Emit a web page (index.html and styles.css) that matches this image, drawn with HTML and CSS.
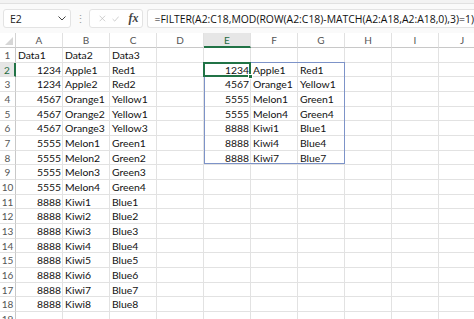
FILE: index.html
```html
<!DOCTYPE html>
<html lang="en">
<head>
  <meta charset="UTF-8" />
  <meta name="viewport" content="width=device-width, initial-scale=1.0" />
  <title>FILTER every third row</title>
  <link rel="stylesheet" href="styles.css">
</head>
<body>
  <div class="ribbon-edge"></div>

  <div class="formula-bar">
    <div class="name-box">
      <span>E2</span>
      <svg class="chevron" width="8" height="5" viewBox="0 0 8 5"><path d="M0.5 0.5 L4 4 L7.5 0.5" fill="none" stroke="#444" stroke-width="1"/></svg>
    </div>
    <div class="grip">⋮</div>
    <div class="fx-tools">
      <svg width="11" height="11" viewBox="0 0 11 11"><path d="M1 1 L10 10 M10 1 L1 10" stroke="#b8b8b8" stroke-width="1.1"/></svg>
      <svg width="12" height="10" viewBox="0 0 12 10"><path d="M1 5 L4.5 8.5 L11 1" fill="none" stroke="#b8b8b8" stroke-width="1.1"/></svg>
      <span class="fx">fx</span>
    </div>
    <div class="formula">=FILTER(A2:C18,MOD(ROW(A2:C18)-MATCH(A2:A18,A2:A18,0),3)=1)</div>
  </div>

  <div class="sheet" id="sheet"></div>

  <script>
    const source = [
      ['Data1', 'Data2', 'Data3'],
      [1234, 'Apple1', 'Red1'],
      [1234, 'Apple2', 'Red2'],
      [4567, 'Orange1', 'Yellow1'],
      [4567, 'Orange2', 'Yellow1'],
      [4567, 'Orange3', 'Yellow3'],
      [5555, 'Melon1', 'Green1'],
      [5555, 'Melon2', 'Green2'],
      [5555, 'Melon3', 'Green3'],
      [5555, 'Melon4', 'Green4'],
      [8888, 'Kiwi1', 'Blue1'],
      [8888, 'Kiwi2', 'Blue2'],
      [8888, 'Kiwi3', 'Blue3'],
      [8888, 'Kiwi4', 'Blue4'],
      [8888, 'Kiwi5', 'Blue5'],
      [8888, 'Kiwi6', 'Blue6'],
      [8888, 'Kiwi7', 'Blue7'],
      [8888, 'Kiwi8', 'Blue8']
    ];

    // result of the FILTER formula, spilled from E2
    const spill = [
      [1234, 'Apple1', 'Red1'],
      [4567, 'Orange1', 'Yellow1'],
      [5555, 'Melon1', 'Green1'],
      [5555, 'Melon4', 'Green4'],
      [8888, 'Kiwi1', 'Blue1'],
      [8888, 'Kiwi4', 'Blue4'],
      [8888, 'Kiwi7', 'Blue7']
    ];

    const letters = 'ABCDEFGHIJ';
    const sheet = document.getElementById('sheet');

    function cell(cls, value) {
      const div = document.createElement('div');
      div.className = cls;
      if (value !== undefined && value !== '') {
        div.textContent = value;
        if (typeof value === 'number') div.classList.add('num');
      }
      sheet.appendChild(div);
      return div;
    }

    cell('corner');
    for (const l of letters) {
      cell(l === 'E' ? 'col-head active' : 'col-head', l);
    }

    for (let r = 1; r <= 19; r++) {
      cell(r === 2 ? 'row-head active' : 'row-head', String(r));
      for (let c = 0; c < letters.length; c++) {
        let value = '';
        if (c < 3 && source[r - 1]) value = source[r - 1][c];
        if (c >= 4 && c < 7 && r >= 2 && spill[r - 2]) value = spill[r - 2][c - 4];
        const div = cell('cell', value);
        if (r === 2 && c === 4) {
          div.classList.add('anchor');
          div.insertAdjacentHTML('beforeend', '<span class="spill-range"></span><span class="selection"></span>');
        }
      }
    }
  </script>
</body>
</html>
```

FILE: styles.css
```css
body {
  margin: 0;
  width: 474px;
  height: 319px;
  overflow: hidden;
  background: #fff;
  font-family: 'Segoe UI', 'Open Sans', sans-serif;
}
.ribbon-edge {
  height: 3px;
  background: #f3f3f3;
  border-bottom: 1px solid #e1e1e1;
}
.formula-bar {
  display: flex;
  align-items: center;
  gap: 4px;
  height: 29px;
  padding: 0 0 0 3px;
  background: #fafafa;
}
.name-box {
  display: flex;
  align-items: center;
  justify-content: space-between;
  width: 74px;
  height: 19px;
  box-sizing: border-box;
  padding: 0 4px 0 6px;
  background: #fff;
  border: 1px solid #e3e3e3;
  border-radius: 3px;
  font-size: 10.5px;
  color: #222;
}
.grip {
  width: 10px;
  text-align: center;
  color: #a0a0a0;
  font-size: 11px;
}
.fx-tools {
  display: flex;
  align-items: center;
  gap: 6px;
  width: 54px;
  height: 19px;
  box-sizing: border-box;
  padding: 0 4px 0 9px;
  background: #fff;
  border: 1px solid #e3e3e3;
  border-radius: 3px;
}
.fx {
  font-family: 'Liberation Serif', serif;
  font-style: italic;
  font-weight: bold;
  font-size: 12px;
  color: #444;
  margin-left: 3px;
}
.formula {
  flex: 1;
  height: 19px;
  line-height: 18px;
  box-sizing: border-box;
  padding-left: 6px;
  background: #fff;
  border: 1px solid #e3e3e3;
  border-right: none;
  border-radius: 3px 0 0 3px;
  font-size: 10.4px;
  color: #111;
  white-space: nowrap;
}
.sheet {
  display: grid;
  grid-template-columns: 16px repeat(10, 47px);
  grid-template-rows: 15px;
  grid-auto-rows: 14.67px;
  font-family: Lato, 'Open Sans', sans-serif;
  font-size: 10.4px;
  color: #111;
}
.sheet > div {
  box-sizing: border-box;
  white-space: nowrap;
  overflow: hidden;
}
.corner {
  position: relative;
  border-right: 1px solid #d4d4d4;
  border-bottom: 1px solid #c8c8c8;
}
.corner::after {
  content: '';
  position: absolute;
  right: 2px;
  bottom: 2px;
  border-left: 8px solid transparent;
  border-bottom: 8px solid #d6d6d6;
}
.col-head {
  text-align: center;
  line-height: 14px;
  color: #555;
  font-size: 10px;
  border-right: 1px solid #e1e1e1;
  border-bottom: 1px solid #c8c8c8;
}
.col-head.active {
  background: #e6e6e6;
  color: #1e6b41;
  border-bottom: 2px solid #217346;
}
.row-head {
  text-align: center;
  line-height: 14px;
  color: #555;
  font-size: 10px;
  border-right: 1px solid #c8c8c8;
  border-bottom: 1px solid #e1e1e1;
}
.row-head.active {
  background: #e6e6e6;
  color: #1e6b41;
  border-right: 2px solid #217346;
}
.cell {
  padding: 0 2px;
  line-height: 14px;
  border-right: 1px solid #e2e2e2;
  border-bottom: 1px solid #e2e2e2;
}
.cell.num {
  text-align: right;
  padding-right: 1px;
}
.sheet > .anchor {
  position: relative;
  overflow: visible;
  z-index: 1;
}
/* E2:G8, the spilled FILTER result */
.spill-range {
  position: absolute;
  left: 0;
  top: -1px;
  width: calc((100% + 1px) * 3);
  height: calc((100% + 1px) * 7);
  border: 1px solid #7d93c8;
  box-sizing: border-box;
  pointer-events: none;
}
.selection {
  position: absolute;
  left: -1px;
  top: -1px;
  right: -1px;
  bottom: -1px;
  border: 2px solid #217346;
}
.selection::after {
  content: '';
  position: absolute;
  right: -4px;
  bottom: -4px;
  width: 5px;
  height: 5px;
  background: #217346;
  border: 1px solid #fff;
  box-sizing: border-box;
}
```
